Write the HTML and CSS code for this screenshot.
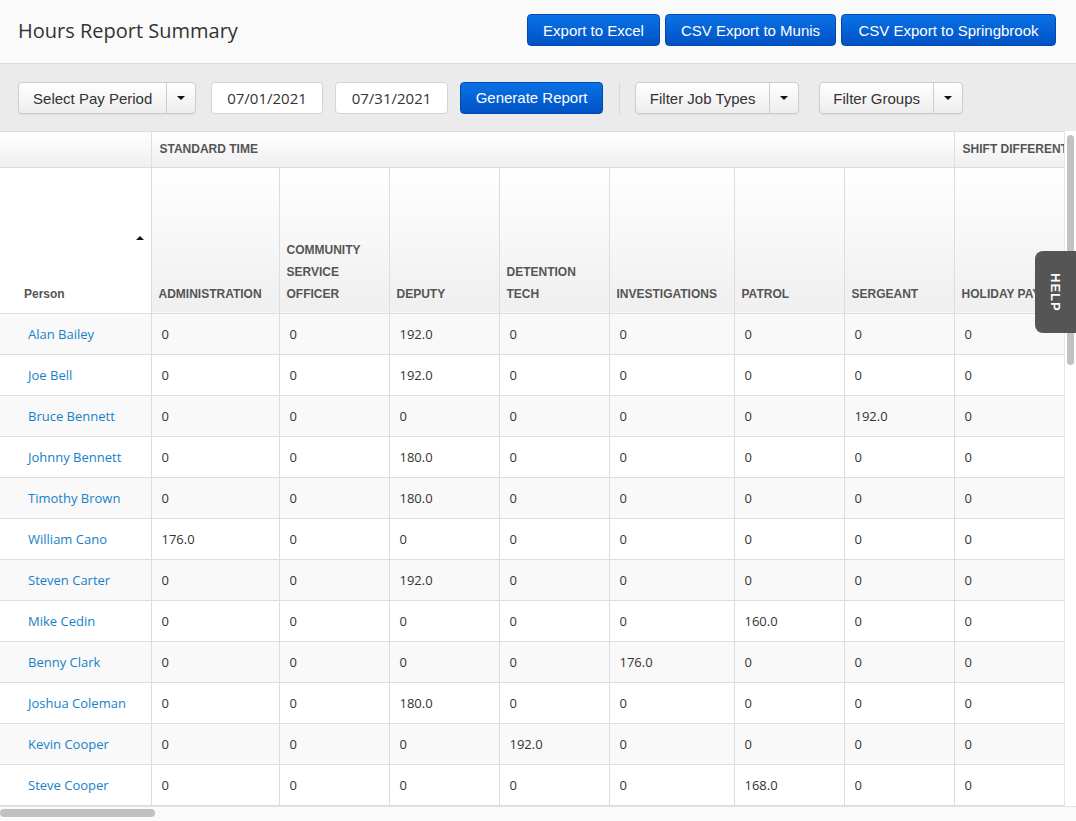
FILE: index.html
```html
<!DOCTYPE html>
<html>
<head>
<meta charset="utf-8">
<title>Hours Report Summary</title>
<link rel="stylesheet" href="styles.css">
</head>
<body>
<header class="page-header">
  <h1 class="title">Hours Report Summary</h1>
  <div class="export-group">
    <button class="btn btn-primary">Export to Excel</button>
    <button class="btn btn-primary">CSV Export to Munis</button>
    <button class="btn btn-primary">CSV Export to Springbrook</button>
  </div>
</header>
<div class="toolbar">
  <div class="split split-pay"><span class="split-label">Select Pay Period</span><span class="split-caret"><span class="caret"></span></span></div>
  <div class="date-input date-1">07/01/2021</div>
  <div class="date-input date-2">07/31/2021</div>
  <button class="btn btn-primary btn-generate">Generate Report</button>
  <div class="tb-sep"></div>
  <div class="split split-jobs"><span class="split-label">Filter Job Types</span><span class="split-caret"><span class="caret"></span></span></div>
  <div class="split split-groups"><span class="split-label">Filter Groups</span><span class="split-caret"><span class="caret"></span></span></div>
</div>
<div class="grid-area">
  <div class="grid-main">
    <div class="grid-viewport">
      <table class="grid">
        <colgroup>
          <col class="c-person"><col class="c-admin"><col class="c-110"><col class="c-110"><col class="c-110"><col class="c-inv"><col class="c-110"><col class="c-110"><col class="c-110"><col class="c-110"><col class="c-110">
        </colgroup>
        <thead>
          <tr class="group-row">
            <th class="grp"></th>
            <th class="grp" colspan="7">STANDARD TIME</th>
            <th class="grp" colspan="3">SHIFT DIFFERENTIAL</th>
          </tr>
          <tr class="col-row">
            <th class="person-h"><div class="person-inner"><span class="sort-up"></span><span>Person</span></div></th>
            <th>ADMINISTRATION</th>
            <th>COMMUNITY SERVICE OFFICER</th>
            <th>DEPUTY</th>
            <th>DETENTION TECH</th>
            <th>INVESTIGATIONS</th>
            <th>PATROL</th>
            <th>SERGEANT</th>
            <th>HOLIDAY PAY</th>
            <th>NIGHT SHIFT</th>
            <th>WEEKEND</th>
          </tr>
        </thead>
        <tbody>
          <tr><td class="name"><a href="#">Alan Bailey</a></td><td>0</td><td>0</td><td>192.0</td><td>0</td><td>0</td><td>0</td><td>0</td><td>0</td><td>0</td><td>0</td></tr>
          <tr><td class="name"><a href="#">Joe Bell</a></td><td>0</td><td>0</td><td>192.0</td><td>0</td><td>0</td><td>0</td><td>0</td><td>0</td><td>0</td><td>0</td></tr>
          <tr><td class="name"><a href="#">Bruce Bennett</a></td><td>0</td><td>0</td><td>0</td><td>0</td><td>0</td><td>0</td><td>192.0</td><td>0</td><td>0</td><td>0</td></tr>
          <tr><td class="name"><a href="#">Johnny Bennett</a></td><td>0</td><td>0</td><td>180.0</td><td>0</td><td>0</td><td>0</td><td>0</td><td>0</td><td>0</td><td>0</td></tr>
          <tr><td class="name"><a href="#">Timothy Brown</a></td><td>0</td><td>0</td><td>180.0</td><td>0</td><td>0</td><td>0</td><td>0</td><td>0</td><td>0</td><td>0</td></tr>
          <tr><td class="name"><a href="#">William Cano</a></td><td>176.0</td><td>0</td><td>0</td><td>0</td><td>0</td><td>0</td><td>0</td><td>0</td><td>0</td><td>0</td></tr>
          <tr><td class="name"><a href="#">Steven Carter</a></td><td>0</td><td>0</td><td>192.0</td><td>0</td><td>0</td><td>0</td><td>0</td><td>0</td><td>0</td><td>0</td></tr>
          <tr><td class="name"><a href="#">Mike Cedin</a></td><td>0</td><td>0</td><td>0</td><td>0</td><td>0</td><td>160.0</td><td>0</td><td>0</td><td>0</td><td>0</td></tr>
          <tr><td class="name"><a href="#">Benny Clark</a></td><td>0</td><td>0</td><td>0</td><td>0</td><td>176.0</td><td>0</td><td>0</td><td>0</td><td>0</td><td>0</td></tr>
          <tr><td class="name"><a href="#">Joshua Coleman</a></td><td>0</td><td>0</td><td>180.0</td><td>0</td><td>0</td><td>0</td><td>0</td><td>0</td><td>0</td><td>0</td></tr>
          <tr><td class="name"><a href="#">Kevin Cooper</a></td><td>0</td><td>0</td><td>0</td><td>192.0</td><td>0</td><td>0</td><td>0</td><td>0</td><td>0</td><td>0</td></tr>
          <tr><td class="name"><a href="#">Steve Cooper</a></td><td>0</td><td>0</td><td>0</td><td>0</td><td>0</td><td>168.0</td><td>0</td><td>0</td><td>0</td><td>0</td></tr>
        </tbody>
      </table>
    </div>
    <div class="vscroll"><div class="vthumb"></div></div>
  </div>
  <div class="hscroll"><div class="hthumb"></div></div>
</div>
<div class="help-tab"><span>HELP</span></div>
</body>
</html>
```
FILE: styles.css
```css
* { box-sizing: border-box; }
html, body { margin: 0; padding: 0; }
body {
  width: 1076px;
  height: 821px;
  overflow: hidden;
  background: #ffffff;
  font-family: "Open Sans", "Liberation Sans", sans-serif;
  color: #333;
}

.page-header {
  height: 64px;
  background: #fafafa;
  border-bottom: 1px solid #dcdcdc;
  display: flex;
  align-items: flex-start;
  justify-content: space-between;
  padding: 0 20px 0 18px;
}
.title {
  margin: 0;
  padding-top: 16px;
  font-size: 20px;
  font-weight: 400;
  line-height: 30px;
  color: #333;
  font-family: "Open Sans", sans-serif;
}
.export-group {
  display: flex;
  gap: 5px;
  padding-top: 14px;
}

.btn {
  height: 32px;
  border-radius: 4px;
  font-family: "Liberation Sans", Arial, sans-serif;
  font-size: 15px;
  padding: 0 14px;
  cursor: pointer;
  line-height: 30px;
}
.btn-primary {
  color: #fff;
  background: linear-gradient(#0a72e6, #0052c4);
  border: 1px solid #0049b0;
}
.export-group .btn { padding-top: 1px; }
.export-group .btn:nth-child(1) { width: 133px; }
.export-group .btn:nth-child(2) { width: 171px; }
.export-group .btn:nth-child(3) { width: 215px; }

.toolbar {
  height: 67px;
  background: #ebebeb;
  display: flex;
  align-items: flex-start;
  padding: 18px 0 0 18px;
}
.split {
  display: flex;
  height: 32px;
  border: 1px solid #cdcdcd;
  border-radius: 4px;
  background: linear-gradient(#ffffff, #ededed);
  box-shadow: 0 1px 1px rgba(0,0,0,0.06);
  font-family: "Liberation Sans", Arial, sans-serif;
  font-size: 15px;
  color: #333;
}
.split-label {
  display: flex;
  align-items: center;
  justify-content: center;
  border-right: 1px solid #cdcdcd;
}
.split-caret {
  width: 28px;
  display: flex;
  align-items: center;
  justify-content: center;
}
.caret {
  width: 0; height: 0;
  border-left: 4px solid transparent;
  border-right: 4px solid transparent;
  border-top: 4px solid #111;
}
.split-pay { width: 178px; }
.split-pay .split-label { width: 150px; }
.split-jobs { width: 164px; margin-left: 15px; }
.split-jobs .split-label { width: 136px; }
.split-groups { width: 144px; margin-left: 20px; }
.split-groups .split-label { width: 116px; }

.date-input {
  height: 32px;
  border: 1px solid #d4d4d4;
  border-radius: 4px;
  background: #fff;
  font-family: "Open Sans", sans-serif;
  font-size: 15px;
  color: #333;
  display: flex;
  align-items: center;
  justify-content: center;
}
.date-1 { width: 112px; margin-left: 15px; }
.date-2 { width: 113px; margin-left: 12px; }
.btn-generate { width: 143px; margin-left: 12px; padding: 0; }
.tb-sep {
  width: 1px;
  height: 32px;
  background: #d8d8d8;
  margin-left: 16px;
}

.grid-area {
  display: flex;
  flex-direction: column;
}
.grid-main {
  display: flex;
  height: 675px;
}
.grid-viewport {
  width: 1064px;
  overflow: hidden;
  border-top: 1px solid #dcdcdc;
}
.grid {
  border-collapse: collapse;
  table-layout: fixed;
  width: 1251px;
}
.c-person { width: 151px; }
.c-admin { width: 128px; }
.c-110 { width: 110px; }
.c-inv { width: 125px; }

.grid th {
  font-family: "Liberation Sans", Arial, sans-serif;
  font-weight: 700;
  font-size: 12px;
  color: #555;
  text-align: left;
  border: 1px solid #dddddd;
  border-top: none;
  background: linear-gradient(#ffffff, #efefef);
  white-space: normal;
}
.grid th:first-child { border-left: none; }
.group-row th {
  height: 35px;
  padding: 0 8px;
  vertical-align: middle;
  white-space: nowrap;
  overflow: hidden;
}
.col-row th {
  height: 146px;
  vertical-align: bottom;
  padding: 0 8px 8px 7px;
  line-height: 22px;
}
.col-row th.person-h {
  background: #ffffff;
  padding: 0;
}
.person-inner {
  height: 145px;
  display: flex;
  flex-direction: column;
  justify-content: space-between;
  padding: 68px 7px 8px 24px;
}
.sort-up {
  align-self: flex-end;
  width: 0; height: 0;
  border-left: 4px solid transparent;
  border-right: 4px solid transparent;
  border-bottom: 4px solid #111;
}

.grid td {
  height: 41px;
  padding: 0 8px 0 10px;
  border: 1px solid #dddddd;
  font-size: 13px;
  color: #333;
  vertical-align: middle;
  white-space: nowrap;
}
.grid td:first-child { border-left: none; }
.grid tbody tr:nth-child(odd) td { background: #f9f9f9; }
.grid tbody tr:nth-child(even) td { background: #ffffff; }
.grid td.name { padding-left: 28px; }
.grid td.name a {
  color: #1681c8;
  text-decoration: none;
}

.vscroll {
  width: 12px;
  background: #ffffff;
  border-left: 1px solid #e6e6e6;
  padding: 4px 2px 0 2px;
}
.vthumb {
  width: 7px;
  height: 230px;
  border-radius: 4px;
  background: #c1c1c1;
}
.hscroll {
  height: 16px;
  background: #fafafa;
  border-top: 1px solid #e4e4e4;
  border-bottom: 1px solid #e8e8e8;
  padding: 2px 0 0 0;
}
.hthumb {
  width: 155px;
  height: 8px;
  border-radius: 4px;
  background: #c1c1c1;
}

.help-tab {
  position: fixed;
  right: 0;
  top: 251px;
  width: 41px;
  height: 82px;
  background: #555555;
  border-radius: 8px 0 0 8px;
  display: flex;
  align-items: center;
  justify-content: center;
}
.help-tab span {
  writing-mode: vertical-rl;
  color: #fff;
  font-family: "Liberation Sans", Arial, sans-serif;
  font-weight: 700;
  font-size: 13px;
  letter-spacing: 1px;
}
```
